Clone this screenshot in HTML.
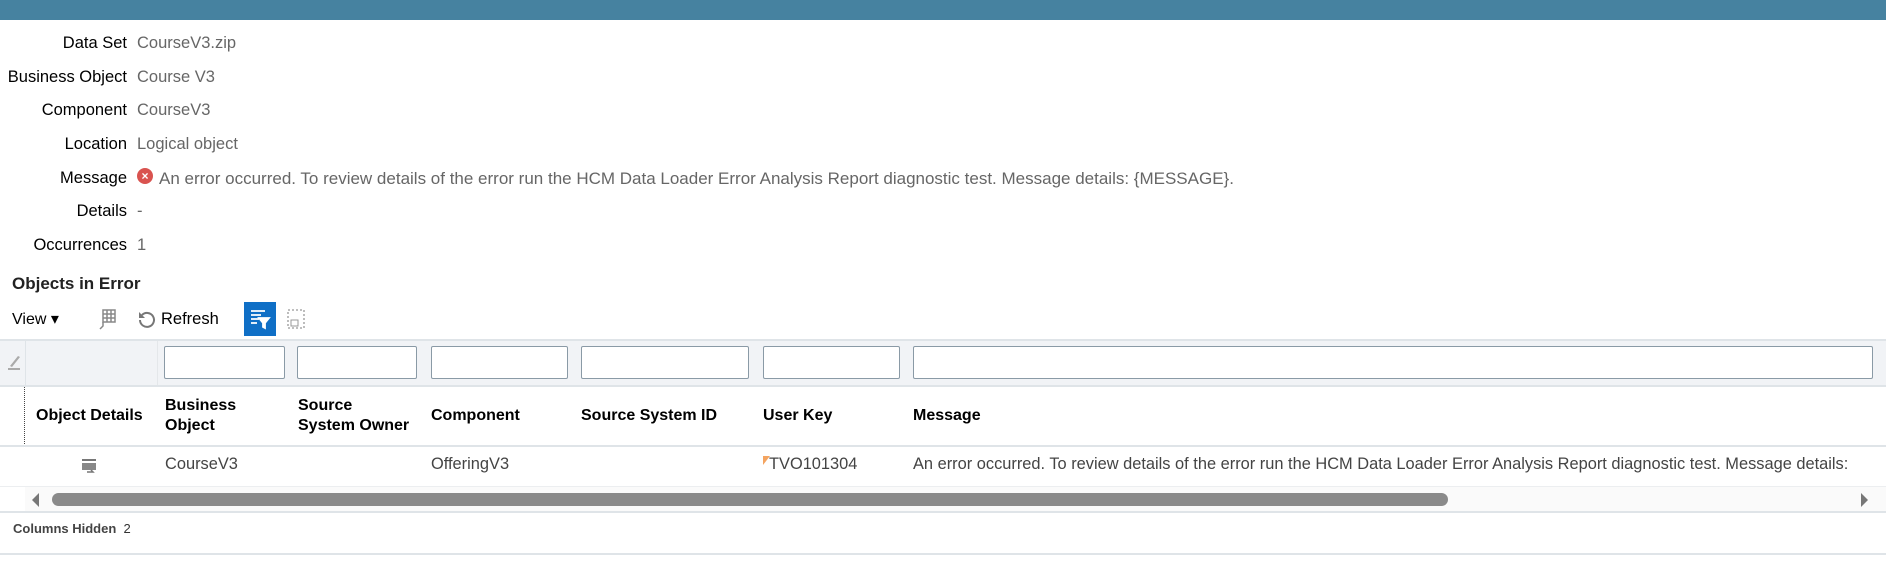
<!DOCTYPE html>
<html><head><style>
*{margin:0;padding:0;box-sizing:border-box}
body{width:1886px;height:568px;background:#fff;font-family:"Liberation Sans",Arial,sans-serif;position:relative;overflow:hidden;color:#000}
.a{position:absolute;white-space:nowrap}
.top{position:absolute;left:0;top:0;width:1886px;height:20px;background:#4682a0}
.lbl{position:absolute;right:1759px;font-size:16.5px;color:#000}
.val{position:absolute;left:137px;font-size:16.5px;color:#666}
.inp{position:absolute;top:346px;height:33px;border:1px solid #8a9aa6;border-radius:2px;background:#fff}
.hd{position:absolute;font-size:16px;font-weight:bold;color:#000;line-height:20px}
.cell{position:absolute;top:455px;font-size:16.4px;color:#444}
.hl{position:absolute;left:0;width:1886px;height:2px;background:#dfe4e8}
</style></head><body>
<div class="top"></div>
<div class="lbl" style="top:34px">Data Set</div><div class="val" style="top:34px">CourseV3.zip</div>
<div class="lbl" style="top:68px">Business Object</div><div class="val" style="top:68px">Course V3</div>
<div class="lbl" style="top:101px">Component</div><div class="val" style="top:101px">CourseV3</div>
<div class="lbl" style="top:135px">Location</div><div class="val" style="top:135px">Logical object</div>
<div class="lbl" style="top:169px">Message</div>
<div class="a" style="left:137px;top:168px;width:16px;height:16px;border-radius:50%;background:#d9534f;color:#fff;font-size:12px;font-weight:bold;line-height:16px;text-align:center">×</div>
<div class="val" style="top:169px;left:159px;font-size:17px">An error occurred. To review details of the error run the HCM Data Loader Error Analysis Report diagnostic test. Message details: {MESSAGE}.</div>
<div class="lbl" style="top:202px">Details</div><div class="val" style="top:202px">-</div>
<div class="lbl" style="top:236px">Occurrences</div><div class="val" style="top:236px">1</div>
<div class="a" style="left:12px;top:274px;font-size:17px;font-weight:bold;color:#222">Objects in Error</div>
<div class="a" style="left:12px;top:309px;font-size:16px;color:#000">View ▾</div>
<svg class="a" style="left:96px;top:308px" width="22" height="24" viewBox="0 0 22 24"><g fill="none" stroke="#888" stroke-width="1.5"><rect x="7" y="2" width="12" height="12"/><path d="M7 6h12M7 10h12M11 2v12M15 2v12M7 14v4l-3 3"/></g></svg>
<svg class="a" style="left:136px;top:310px" width="20" height="20" viewBox="0 0 20 20"><path d="M6 5a7 7 0 1 1-2 5" fill="none" stroke="#777" stroke-width="2"/><path d="M3 2v6h6z" fill="#777"/></svg>
<div class="a" style="left:161px;top:310px;font-size:16.5px;color:#000">Refresh</div>
<div class="a" style="left:244px;top:302px;width:32px;height:34px;background:#0f6fc6"></div>
<svg class="a" style="left:249px;top:308px" width="22" height="22" viewBox="0 0 22 22"><g fill="none" stroke="#fff" stroke-width="1.8"><path d="M2 3h14M2 7h10M2 11h8M2 15h6"/><path d="M10 10h10l-4 5v5l-2-1v-4z" fill="#fff"/></g></svg>
<svg class="a" style="left:285px;top:307px" width="22" height="24" viewBox="0 0 22 24"><g fill="none" stroke="#999" stroke-width="1.3" stroke-dasharray="2 2"><rect x="3" y="3" width="16" height="18"/></g><rect x="6" y="13" width="7" height="6" fill="none" stroke="#999"/></svg>
<div class="a" style="left:0;top:339px;width:1886px;height:47px;background:#f1f3f6;border-top:2px solid #dfe4e8"></div>
<div class="a" style="left:25px;top:341px;width:1px;height:45px;background:#dfe4e8"></div>
<div class="a" style="left:157px;top:341px;width:1px;height:45px;background:#e4e7ea"></div>
<svg class="a" style="left:6px;top:352px" width="16" height="20" viewBox="0 0 16 20"><path d="M4 14l8-10 2 1-8 10z" fill="#aaa"/><path d="M2 17h12" stroke="#aaa" stroke-width="2"/></svg>
<div class="inp" style="left:164px;width:121px"></div>
<div class="inp" style="left:297px;width:120px"></div>
<div class="inp" style="left:431px;width:137px"></div>
<div class="inp" style="left:581px;width:168px"></div>
<div class="inp" style="left:763px;width:137px"></div>
<div class="inp" style="left:913px;width:960px"></div>
<div class="hl" style="top:385px"></div>
<div class="a" style="left:0;top:387px;width:25px;height:59px;border-right:1px dotted #444;border-bottom:1px dotted #444"></div>
<div class="hd" style="left:36px;top:406px">Object Details</div>
<div class="hd" style="left:165px;top:396px">Business<br>Object</div>
<div class="hd" style="left:298px;top:396px">Source<br>System Owner</div>
<div class="hd" style="left:431px;top:406px">Component</div>
<div class="hd" style="left:581px;top:406px">Source System ID</div>
<div class="hd" style="left:763px;top:406px">User Key</div>
<div class="hd" style="left:913px;top:406px">Message</div>
<div class="hl" style="top:445px"></div>
<svg class="a" style="left:80px;top:457px" width="18" height="18" viewBox="0 0 18 18"><rect x="2" y="2" width="14" height="2" fill="#777"/><rect x="2" y="6" width="14" height="7" fill="#888"/><path d="M7 15h6l-2-2" stroke="#777" stroke-width="1.5" fill="none"/></svg>
<div class="cell" style="left:165px">CourseV3</div>
<div class="cell" style="left:431px">OfferingV3</div>
<div class="a" style="left:763px;top:456px;width:0;height:0;border-top:9px solid #f4a460;border-right:7px solid transparent"></div>
<div class="cell" style="left:769px">TVO101304</div>
<div class="cell" style="left:913px">An error occurred. To review details of the error run the HCM Data Loader Error Analysis Report diagnostic test. Message details:</div>
<div class="a" style="left:0;top:486px;width:1886px;height:26px;background:#fafafa;border-top:1px solid #eceef0"></div>
<div class="a" style="left:0;top:487px;width:25px;height:25px;background:#fff"></div>
<div class="a" style="left:32px;top:493px;width:0;height:0;border-right:7px solid #777;border-top:7px solid transparent;border-bottom:7px solid transparent"></div>
<div class="a" style="left:52px;top:493px;width:1396px;height:13px;border-radius:7px;background:#8a8a8a"></div>
<div class="a" style="left:1861px;top:493px;width:0;height:0;border-left:7px solid #777;border-top:7px solid transparent;border-bottom:7px solid transparent"></div>
<div class="hl" style="top:511px"></div>
<div class="a" style="left:13px;top:521px;font-size:13px;font-weight:bold;color:#444">Columns Hidden&nbsp; <span style="font-weight:normal;color:#333">2</span></div>
<div class="hl" style="top:553px"></div>
</body></html>
